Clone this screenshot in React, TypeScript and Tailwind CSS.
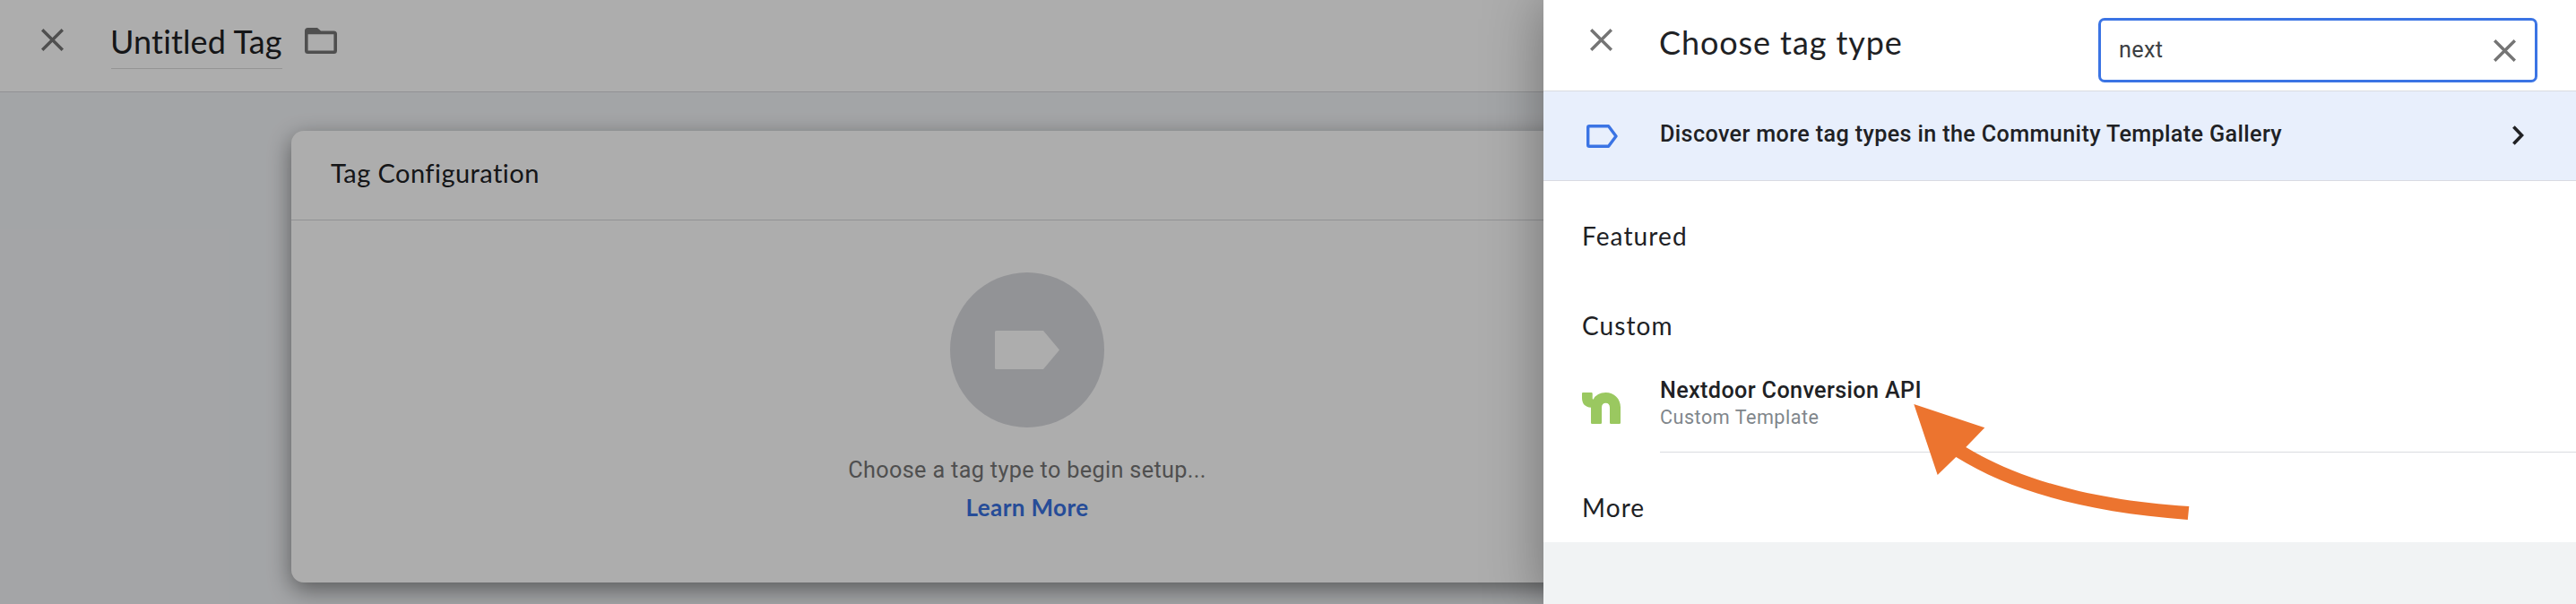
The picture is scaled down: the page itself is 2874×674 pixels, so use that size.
import type { ReactNode } from 'react';

function CloseIcon({ className = '' }: { className?: string }) {
  return (
    <svg viewBox="0 0 25 25" className={`size-[25px] shrink-0 ${className}`} fill="none" stroke="currentColor" strokeWidth="3.4">
      <path d="M1.2 1.2 23.8 23.8M23.8 1.2 1.2 23.8" />
    </svg>
  );
}

function FolderIcon() {
  return (
    <svg viewBox="0 0 36 29" className="h-[29px] w-9 shrink-0" fill="#757575">
      <path
        fillRule="evenodd"
        d="M3.5 0H14l4 3.6h14.500A3.500 3.500 0 0 1 36 7.100V25.500A3.500 3.500 0 0 1 32.500 29H3.500A3.500 3.500 0 0 1 0 25.500V3.500A3.500 3.500 0 0 1 3.500 0ZM3.600 7.200V25.400H32.400V7.200Z"
      />
    </svg>
  );
}

function NextdoorLogo() {
  return (
    <svg viewBox="0 0 43 35" className="h-[35px] w-[43px] shrink-0" fill="#9ac860">
      <path d="M1 0H10.500Q11.700 0 11.700 1.200V6.500Q11.700 7.800 12.800 7.400C14.500 3.500 20 0 26.500 0C36 0 43 7 43 16.500V33.800Q43 35 41.800 35H32.200Q31 35 31 33.800V16.700C31 13.500 29.200 11.700 26.500 11.700C23.800 11.700 22 13.500 22 16.700V33.800Q22 35 20.800 35H11.200Q10 35 10 33.800V16.800C3.500 16.300 0 12.500 0 6V1Q0 0 1 0Z" />
    </svg>
  );
}

function SectionTitle({ children }: { children: ReactNode }) {
  return (
    <h2 className="font-['Lato',sans-serif] text-[28px] leading-[40px] tracking-[1.1px] text-[#202124]">{children}</h2>
  );
}

function TagEditor() {
  return (
    <main className="h-full w-[1967px] bg-[#f1f3f6]">
      <header className="flex h-[103px] items-start border-b border-[#d6d8db] bg-white pl-[46px] text-[#757575]">
        <CloseIcon className="mt-8" />
        <div className="ml-[53px] mt-[22px] flex h-[55px] w-[191px] border-b border-[#dadada]">
          <h1 className="-ml-px whitespace-nowrap font-['Lato',sans-serif] text-[36px] leading-[48px] tracking-[0.15px] text-[#202124] [font-variant-ligatures:none]">
            Untitled Tag
          </h1>
        </div>
        <div className="ml-[25px] mt-[31px]">
          <FolderIcon />
        </div>
      </header>

      <section className="ml-[325px] mt-[43px] h-[504px] rounded-[14px] bg-white shadow-[0_8px_26px_rgba(0,0,0,0.45)]">
        <div className="flex h-[100px] items-center border-b border-[#d6d8db] pb-[5px] pl-11">
          <h2 className="font-['Lato',sans-serif] text-[29px] leading-10 tracking-[0.45px] text-[#202124] [font-variant-ligatures:none]">
            Tag Configuration
          </h2>
        </div>
        <div className="flex flex-col items-center pt-[58px]">
          <div className="flex h-[173px] w-[172px] items-center justify-center rounded-full bg-[#d8d9de]">
            <svg viewBox="0 0 72 43" className="h-[43px] w-[72px]" fill="#fff">
              <path d="M1.500 0H54L72 21.500L54 43H1.500Q0 43 0 41.500V1.500Q0 0 1.500 0Z" />
            </svg>
          </div>
          <p className="mt-7 font-['Roboto',sans-serif] text-[25.2px] leading-10 tracking-[0.36px] text-[#757575]">
            Choose a tag type to begin setup...
          </p>
          <a className="mt-px font-['Lato',sans-serif] text-[26px] font-bold leading-10 tracking-[0.4px] text-[#3871e0]">
            Learn More
          </a>
        </div>
      </section>
    </main>
  );
}

function TagTypePanel() {
  return (
    <aside className="absolute inset-y-0 right-0 flex w-[1152px] flex-col bg-[#f1f3f4] shadow-[0_0_60px_rgba(0,0,0,0.35)]">
      <div className="h-[605px] bg-white">
        <header className="flex h-[102px] items-start border-b border-[#dadce0] pl-[52px] pr-[43px] text-[#757575]">
          <CloseIcon className="mt-8" />
          <h1 className="ml-[52px] mt-[23px] whitespace-nowrap font-['Lato',sans-serif] text-[36px] leading-[48px] tracking-[0.9px] text-[#202124]">
            Choose tag type
          </h1>
          <div className="ml-auto mt-5 flex h-[72px] w-[490px] items-center justify-between rounded-[7px] border-3 border-[#3b74e4] pl-5 pr-[21px]">
            <span className="font-['Roboto',sans-serif] text-[25.2px] leading-10 tracking-[0.36px] text-[#3c4043]">next</span>
            <CloseIcon />
          </div>
        </header>

        <div className="flex h-[100px] items-center border-b border-[#d9dbe2] bg-[#e8effc] pl-12 pr-[58px]">
          <svg viewBox="0 0 35 26" className="h-[26px] w-[35px]" fill="none" stroke="#3b74e4" strokeWidth="3.4" strokeLinejoin="round">
            <path d="M3.200 1.700H24.600L33 13L24.600 24.300H3.200Q1.700 24.300 1.700 22.800V3.200Q1.700 1.700 3.200 1.700Z" />
          </svg>
          <span className="ml-[47px] whitespace-nowrap pb-1 font-['Roboto',sans-serif] text-[25.2px] font-medium leading-10 tracking-[0.36px] text-[#202124]">
            Discover more tag types in the Community Template Gallery
          </span>
          <svg viewBox="0 0 13 22" className="mb-0.5 ml-auto h-[22px] w-[13px]" fill="none" stroke="#202124" strokeWidth="3.6">
            <path d="M1.400 1.400 10.500 11 1.400 20.600" />
          </svg>
        </div>

        <div className="flex flex-col pl-[43px] pt-[41px]">
          <SectionTitle>Featured</SectionTitle>
          <div className="mt-[60px]">
            <SectionTitle>Custom</SectionTitle>
          </div>
          <div className="mt-[21px] flex h-[101px]">
            <div className="mt-[34px] w-[87px] shrink-0">
              <NextdoorLogo />
            </div>
            <div className="grow border-b border-[#dadce0] pt-[16px] font-['Roboto',sans-serif]">
              <div className="text-[25.2px] font-medium leading-[32px] tracking-[0.36px] text-[#202124]">
                Nextdoor Conversion API
              </div>
              <div className="text-[21.6px] leading-[28px] tracking-[0.5px] text-[#80868b]">Custom Template</div>
            </div>
          </div>
          <div className="mt-[41px]">
            <SectionTitle>More</SectionTitle>
          </div>
        </div>
      </div>

      {/* Arrow pointing at the custom template */}
      <svg viewBox="0 0 310 132" className="absolute left-[412px] top-[450px] h-[132px] w-[310px]" fill="#ec742f">
        <path d="M1.300 1 80.300 27.300 59.300 49C110 80 190 108 308.300 115L306.800 130C190 121 110 98 48.300 60L27.700 80Z" />
      </svg>
    </aside>
  );
}

export default function App() {
  return (
    <div className="relative h-[674px] w-[2874px] overflow-hidden">
      <TagEditor />
      <div className="absolute inset-0 bg-black/32" />
      <TagTypePanel />
    </div>
  );
}
